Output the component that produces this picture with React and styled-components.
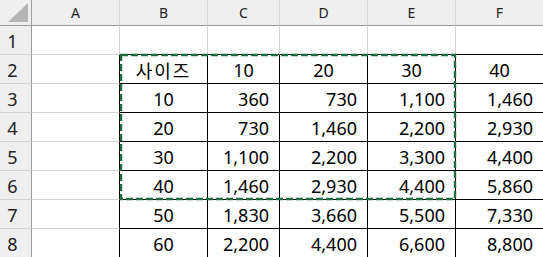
import React from "react";
import styled, { createGlobalStyle } from "styled-components";

const GlobalStyle = createGlobalStyle`
  html, body { margin: 0; padding: 0; background: #ffffff; overflow: hidden; }
  body { font-family: "Noto Sans", "Noto Sans CJK KR", sans-serif; }
`;

const COLS = ["A", "B", "C", "D", "E", "F"];
const COL_WIDTHS = [32, 88, 88, 72, 88, 88, 88];

const DATA = {
  2: [null, "사이즈", "10", "20", "30", "40"],
  3: [null, "10", "360", "730", "1,100", "1,460"],
  4: [null, "20", "730", "1,460", "2,200", "2,930"],
  5: [null, "30", "1,100", "2,200", "3,300", "4,400"],
  6: [null, "40", "1,460", "2,930", "4,400", "5,860"],
  7: [null, "50", "1,830", "3,660", "5,500", "7,330"],
  8: [null, "60", "2,200", "4,400", "6,600", "8,800"],
};

const Sheet = styled.div`
  position: relative;
  display: grid;
  grid-template-columns: ${COL_WIDTHS.map((w) => `${w}px`).join(" ")};
  grid-template-rows: 26px repeat(8, 29px);
  width: 544px;
`;

const Corner = styled.div`
  position: relative;
  background: #efefef;
  border-right: 1px solid #9d9d9d;
  border-bottom: 1px solid #9d9d9d;
  box-sizing: border-box;
`;

const CornerTriangle = styled.svg`
  position: absolute;
  left: 8px;
  top: 3px;
`;

const ColHeader = styled.div`
  background: #efefef;
  border-right: 1px solid #d4d4d4;
  border-bottom: 1px solid #9d9d9d;
  box-sizing: border-box;
  display: flex;
  align-items: center;
  justify-content: center;
  font-family: "Noto Sans", "Noto Sans CJK KR", sans-serif;
  font-size: 14px;
  color: #222;
  padding-bottom: 1px;
`;

const RowHeader = styled.div`
  background: #efefef;
  border-right: 1px solid #9d9d9d;
  border-bottom: 1px solid #d4d4d4;
  box-sizing: border-box;
  display: flex;
  align-items: center;
  justify-content: center;
  padding-right: 6px;
  padding-top: 2px;
  font-family: "Noto Sans", "Noto Sans CJK KR", sans-serif;
  font-size: 18px;
  color: #222;
`;

const Cell = styled.div`
  box-sizing: border-box;
  border-right: 1px solid ${(p) => (p.$rb ? "#000" : "#d4d4d4")};
  border-bottom: 1px solid ${(p) => (p.$bb ? "#000" : "#d4d4d4")};
  display: flex;
  align-items: center;
  justify-content: ${(p) => (p.$align === "right" ? "flex-end" : "center")};
  padding: 2px ${(p) => (p.$align === "right" ? "10px" : "0")} 0 0;
  font-family: "Noto Sans", "Noto Sans CJK KR", sans-serif;
  font-size: 18px;
  letter-spacing: ${(p) => (p.$wide ? "2px" : "0")};
  color: #000;
  white-space: nowrap;
  overflow: hidden;
`;

const Marquee = styled.svg`
  position: absolute;
  left: 119px;
  top: 53px;
  pointer-events: none;
`;

export default function App() {
  const rows = [];
  for (let r = 1; r <= 8; r++) {
    rows.push(<RowHeader key={`rh${r}`}>{r}</RowHeader>);
    COLS.forEach((c, ci) => {
      const value = DATA[r] ? DATA[r][ci] : null;
      const rb = r >= 2;
      const bb = ci >= 1;
      const align = r === 2 || ci === 1 ? "center" : "right";
      rows.push(
        <Cell
          key={`${c}${r}`}
          $rb={rb}
          $bb={bb}
          $align={align}
          $wide={value === "사이즈"}
        >
          {value}
        </Cell>
      );
    });
  }

  const mw = 455 - 119 + 2;
  const mh = 199 - 53 + 2;

  return (
    <>
      <GlobalStyle />
      <Sheet>
        <Corner>
          <CornerTriangle width="20" height="19" viewBox="0 0 20 19">
            <polygon points="20,0 20,19 0,19" fill="#b5b5b5" />
          </CornerTriangle>
        </Corner>
        {COLS.map((c) => (
          <ColHeader key={c}>{c}</ColHeader>
        ))}
        {rows}
        <Marquee width={mw} height={mh} viewBox={`0 0 ${mw} ${mh}`}>
          <rect
            x="2"
            y="2"
            width={mw - 4}
            height={mh - 4}
            fill="none"
            stroke="#1e6b40"
            strokeWidth="2.4"
            strokeDasharray="7 3"
          />
        </Marquee>
      </Sheet>
    </>
  );
}
